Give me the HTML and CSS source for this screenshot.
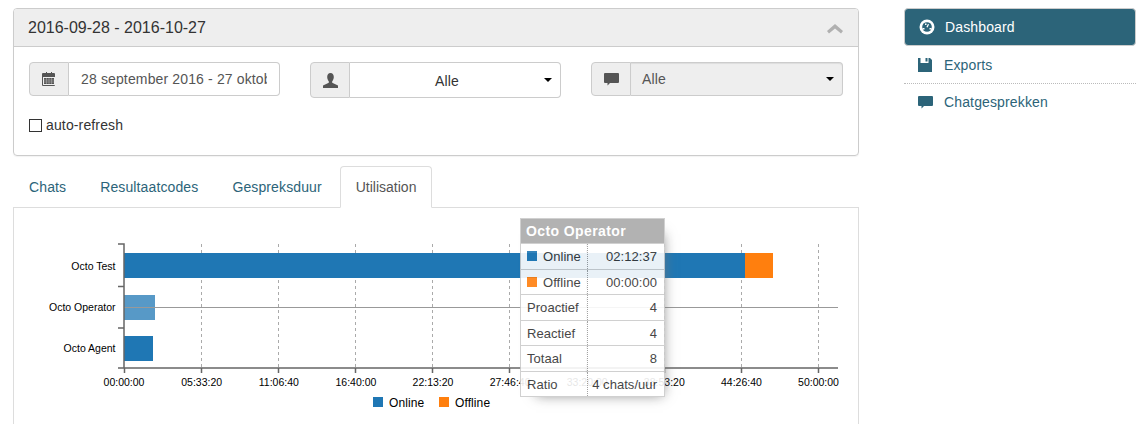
FILE: index.html
```html
<!DOCTYPE html>
<html lang="nl">
<head>
<meta charset="utf-8">
<title>Dashboard</title>
<link rel="stylesheet" href="styles.css">
</head>
<body>
<div class="page">
  <main class="main">
    <section class="panel">
      <header class="panel-head">
        <h3 class="panel-title">2016-09-28 - 2016-10-27</h3>
        <svg class="chev" width="16" height="10" viewBox="0 0 16 10"><path d="M8 0 L16 7 L14 9.500 L8 4.500 L2 9.500 L0 7 Z" fill="#b0b0b0"/></svg>
      </header>
      <div class="panel-body">
        <div class="filters">
          <div class="group">
            <span class="addon">
              <svg width="14" height="14" viewBox="0 0 14 14"><path fill="#555" d="M2 1h2V0h1v1h4V0h1v1h2a1 1 0 0 1 1 1v11a1 1 0 0 1-1 1H1a1 1 0 0 1-1-1V2a1 1 0 0 1 1-1zM1 5v8h12V5z"/><path fill="#555" d="M2 6h10v6H2z"/><path stroke="#aaa" stroke-width=".6" d="M2 8h10M2 10h10M4.500 6v6M7 6v6M9.500 6v6"/></svg>
            </span>
            <input class="field" type="text" readonly value="28 september 2016 - 27 oktober 2016">
          </div>
          <div class="group group-tall">
            <span class="addon">
              <svg width="15" height="15" viewBox="0 0 15 15"><path fill="#555" d="M7.500 0C9.800 0 10.800 1.800 10.800 4c0 1.600-.7 3.300-1.600 4.200v1.500L15 12.500V15H0v-2.500l5.800-2.800V8.200C4.900 7.300 4.200 5.600 4.200 4 4.200 1.800 5.200 0 7.500 0z"/></svg>
            </span>
            <div class="select select-center">Alle<i class="caret"></i></div>
          </div>
          <div class="group">
            <span class="addon">
              <svg width="15" height="14" viewBox="0 0 15 14"><path fill="#555" d="M1 1h13a1 1 0 0 1 1 1v8a1 1 0 0 1-1 1H6l-2.500 2.500V11H1a1 1 0 0 1-1-1V2a1 1 0 0 1 1-1z"/></svg>
            </span>
            <div class="select select-muted">Alle<i class="caret"></i></div>
          </div>
        </div>
        <label class="check"><span class="box"></span>auto-refresh</label>
      </div>
    </section>

    <nav class="tabs">
      <a class="tab">Chats</a>
      <a class="tab">Resultaatcodes</a>
      <a class="tab">Gespreksduur</a>
      <a class="tab tab-active">Utilisation</a>
    </nav>

    <section class="tab-content">
      <svg class="chart" width="844" height="216" viewBox="0 0 844 216">
        <g class="grid">
          <path d="M187.500 36V160M264.500 36V160M341.500 36V160M418.500 36V160M495.500 36V160M572.500 36V160M650.500 36V160M727.500 36V160M804.500 36V160"/>
        </g>
        <rect class="s-online" x="110" y="45" width="621" height="25"/>
        <rect class="s-offline" x="731" y="45" width="28" height="25"/>
        <rect class="s-online s-faded" x="110" y="87" width="31" height="25"/>
        <rect class="s-online" x="110" y="128" width="29" height="25"/>
        <path class="focus" d="M110 99.500H824"/>
        <path class="axis" d="M104 36H110V160M104 78.500H110M104 120H110M104 160H824"/>
        <path class="axis" d="M110.500 160v5M187.500 160v5M264.500 160v5M341.500 160v5M418.500 160v5M495.500 160v5M572.500 160v5M650.500 160v5M727.500 160v5M804.500 160v5"/>
        <g class="lab-y">
          <text x="101.500" y="62">Octo Test</text>
          <text x="101.500" y="103">Octo Operator</text>
          <text x="101.500" y="144">Octo Agent</text>
        </g>
        <g class="lab-x">
          <text x="110" y="178">00:00:00</text>
          <text x="187.700" y="178">05:33:20</text>
          <text x="264.800" y="178">11:06:40</text>
          <text x="341.900" y="178">16:40:00</text>
          <text x="419" y="178">22:13:20</text>
          <text x="496.100" y="178">27:46:40</text>
          <text x="573.200" y="178">33:20:00</text>
          <text x="650.300" y="178">38:53:20</text>
          <text x="727.400" y="178">44:26:40</text>
          <text x="804.500" y="178">50:00:00</text>
        </g>
        <rect class="s-online" x="359" y="189" width="10" height="10"/>
        <text class="lab-leg" x="375" y="199">Online</text>
        <rect class="s-offline" x="425" y="189" width="10" height="10"/>
        <text class="lab-leg" x="441" y="199">Offline</text>
      </svg>

      <table class="tip">
        <colgroup><col class="tip-col-k"><col class="tip-col-v"></colgroup>
        <tr><th colspan="2">Octo Operator</th></tr>
        <tr><td class="tip-k"><i class="sw sw-on"></i>Online</td><td class="tip-v">02:12:37</td></tr>
        <tr><td class="tip-k"><i class="sw sw-off"></i>Offline</td><td class="tip-v">00:00:00</td></tr>
        <tr><td class="tip-k">Proactief</td><td class="tip-v">4</td></tr>
        <tr><td class="tip-k">Reactief</td><td class="tip-v">4</td></tr>
        <tr><td class="tip-k">Totaal</td><td class="tip-v">8</td></tr>
        <tr><td class="tip-k">Ratio</td><td class="tip-v">4 chats/uur</td></tr>
      </table>
    </section>
  </main>

  <aside class="side">
    <a class="side-active">
      <svg width="16" height="16" viewBox="0 0 16 16"><circle cx="8" cy="8" r="7.500" fill="#fff"/><circle cx="8" cy="8" r="4.800" fill="#2c6479"/><path d="M3.500 9h2v1.500h-2zM10.500 9h2v1.500h-2zM6 4.500h1.500v1.500H6zM9 4.800l1 .8L8.600 8.600l-1.200-.6z" fill="#fff"/></svg>
      Dashboard
    </a>
    <a class="side-link side-rule">
      <svg width="14" height="14" viewBox="0 0 14 14"><path fill="#2c6479" d="M0 0h2.500v5h8V0H12l2 2v12H0zM3 10h8v4H3z"/><path fill="#2c6479" d="M7.500 0h2v3.500h-2z"/></svg>
      Exports
    </a>
    <a class="side-link side-chat">
      <svg width="15" height="14" viewBox="0 0 15 14"><path fill="#2c6479" d="M1 1h13a1 1 0 0 1 1 1v8a1 1 0 0 1-1 1H6l-2.500 2.500V11H1a1 1 0 0 1-1-1V2a1 1 0 0 1 1-1z"/></svg>
      Chatgesprekken
    </a>
  </aside>
</div>
</body>
</html>
```

FILE: styles.css
```css
* { box-sizing: border-box; }
html, body { margin: 0; height: 424px; overflow: hidden; background: #fff; }
body { font-family: "Liberation Sans", Arial, sans-serif; font-size: 14px; line-height: 20px; color: #333; letter-spacing: .14px; }

.page { display: flex; align-items: flex-start; gap: 45px; padding: 8px 0 0 13px; }
.main { width: 846px; flex: none; }

.panel { border: 1px solid #ccc; border-radius: 4px; box-shadow: 0 1px 1px rgba(0,0,0,.05); height: 148px; }
.panel-head { display: flex; justify-content: space-between; align-items: center; height: 38px; padding: 0 15px 0 15px; background: #eee; border-bottom: 1px solid #ccc; border-radius: 3px 3px 0 0; }
.panel-title { margin: 0 0 0 -1px; font-size: 16px; font-weight: 400; line-height: 18px; letter-spacing: 0; }
.chev { margin-top: 2px; }
.panel-body { padding: 15px; }

.filters { display: grid; grid-template-columns: 251px 251px 1fr; gap: 30px; align-items: start; }
.group { display: flex; height: 34px; }
.group-tall { height: 36px; }
.addon { flex: none; width: 40px; display: flex; align-items: center; justify-content: center; background: #eee; border: 1px solid #ccc; border-radius: 4px 0 0 4px; }
.field, .select { flex: 1; min-width: 0; height: 100%; border: 1px solid #ccc; border-left: 0; border-radius: 0 4px 4px 0; padding: 6px 12px; font: 14px/20px "Liberation Sans", Arial, sans-serif; letter-spacing: .14px; color: #555; background: #fff; outline: 0; }
.select { display: flex; align-items: center; position: relative; }
.select-center { justify-content: center; color: #333; padding: 2px 28px 0 12px; }
.select-muted { background: #eee; padding-left: 11px; box-shadow: inset 0 1px 1px rgba(0,0,0,.075); }
.caret { position: absolute; right: 8px; top: 50%; margin-top: -2px; width: 0; height: 0; border: 4px solid transparent; border-top-color: #000; border-bottom: 0; }

.check { display: flex; align-items: center; margin-top: 17px; height: 20px; }
.box { width: 13px; height: 13px; margin-right: 4px; border: 1px solid #333; background: #fff; }

.tabs { display: flex; gap: 2px; height: 42px; margin-top: 10px; position: relative; z-index: 1; letter-spacing: .12px; }
.tab { padding: 10px 15px; border: 1px solid transparent; color: #2c6479; line-height: 20px; height: 42px; }
.tab-active { color: #555; background: #fff; border-color: #ddd #ddd #fff; border-radius: 4px 4px 0 0; letter-spacing: 0; }

.tab-content { position: relative; height: 220px; margin-top: -1px; border: 1px solid #ddd; border-bottom: 0; }
.chart { display: block; }
.grid path { fill: none; stroke: #aaa; stroke-dasharray: 3 3; }
.s-online { fill: #1f77b4; }
.s-offline { fill: #ff7f0e; }
.s-faded { opacity: .75; }
.focus { fill: none; stroke: #999; stroke-width: 1; }
.axis { fill: none; stroke: #666; stroke-width: 1.5; }
.lab-y text { font: 10.500px "Liberation Sans", Arial, sans-serif; fill: #000; text-anchor: end; letter-spacing: 0; }
.lab-x text { font: 10.500px "Liberation Sans", Arial, sans-serif; fill: #000; text-anchor: middle; letter-spacing: 0; }
.lab-leg { font: 12px "Liberation Sans", Arial, sans-serif; fill: #000; letter-spacing: .1px; }

.tip { position: absolute; left: 506px; top: 10px; width: 144px; table-layout: fixed; border-collapse: collapse; border-spacing: 0; background: #fff; opacity: .9; box-shadow: 7px 7px 12px -9px #777; }
.tip-col-k { width: 67px; }
.tip-col-v { width: 77px; }
.tip tr { border: 1px solid #ccc; height: 25.500px; }
.tip tr:first-child { height: 25px; }
.tip th { background: #aaa; color: #fff; font-size: 14px; line-height: 20px; padding: 2px 5px; text-align: left; font-weight: 700; letter-spacing: .4px; }
.tip td { font-size: 13px; line-height: 20px; padding: 3px 7px 1px 6px; background: #fff; white-space: nowrap; letter-spacing: .05px; }
.tip .tip-v { text-align: right; border-left: 1px dotted #999; padding-left: 2px; }
.sw { display: inline-block; width: 10px; height: 10px; margin-right: 6px; }
.sw-on { background: #1f77b4; }
.sw-off { background: #ff7f0e; }

.side { width: 232px; flex: none; }
.side a { display: flex; align-items: center; gap: 11px; }
.side .side-active { height: 38px; padding-left: 14px; gap: 10px; background: #2c6479; color: #fff; border: 1px solid #ccc; border-radius: 4px; }
.side-link { padding-left: 14px; color: #2c6479; font-size: 14px; }
.side .side-rule { height: 38px; padding-top: 1px; gap: 12px; border-bottom: 1px dotted #bbb; }
.side-chat { height: 36px; }
```
